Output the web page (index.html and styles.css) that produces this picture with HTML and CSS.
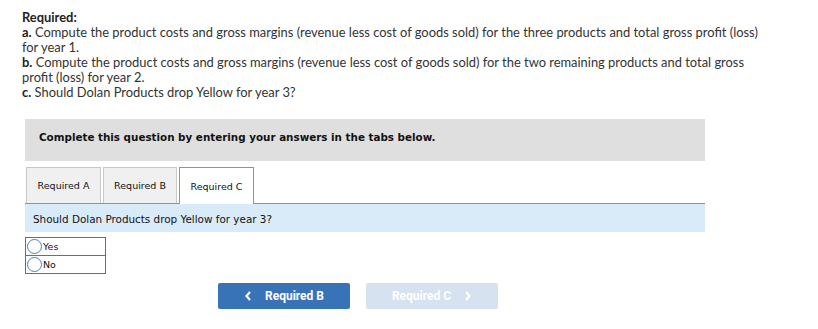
FILE: index.html
```html
<!DOCTYPE html>
<html>
<head>
<meta charset="utf-8">
<link rel="stylesheet" href="styles.css">
</head>
<body>
<div class="page">
  <div class="req">
    <p class="req-title">Required:</p>
    <p><b>a.</b> Compute the product costs and gross margins (revenue less cost of goods sold) for the three products and total gross profit (loss) for year 1.</p>
    <p><b>b.</b> Compute the product costs and gross margins (revenue less cost of goods sold) for the two remaining products and total gross profit (loss) for year 2.</p>
    <p><b>c.</b> Should Dolan Products drop Yellow for year 3?</p>
  </div>
  <div class="question">
    <div class="instructions">Complete this question by entering your answers in the tabs below.</div>
    <div class="tabs">
      <div class="tab">Required A</div>
      <div class="tab tab-b">Required B</div>
      <div class="tab active">Required C</div>
    </div>
    <div class="prompt">Should Dolan Products drop Yellow for year 3?</div>
    <div class="choices">
      <label class="choice"><span class="radio"></span>Yes</label>
      <label class="choice"><span class="radio"></span>No</label>
    </div>
    <div class="nav">
      <button class="btn prev"><svg width="8" height="10" viewBox="0 0 8 10"><path d="M6 1 L2.5 5 L6 9" fill="none" stroke="#fff" stroke-width="2.2"/></svg><span>Required B</span></button>
      <button class="btn next"><span>Required C</span><svg width="8" height="10" viewBox="0 0 8 10"><path d="M2 1 L5.5 5 L2 9" fill="none" stroke="#fff" stroke-width="2.2"/></svg></button>
    </div>
  </div>
</div>
</body>
</html>
```

FILE: styles.css
```css
html, body {
  margin: 0;
  padding: 0;
  background: #fff;
}
.page {
  padding: 10px 0 0 22px;
}
.req {
  width: 745px;
  font-family: Lato, "Open Sans", sans-serif;
  font-size: 12.9px;
  line-height: 15px;
  color: #333;
}
.req p {
  margin: 0;
}
.req b, .req-title {
  font-weight: 700;
  color: #222;
}
.question {
  margin: 19px 0 0 3px;
  width: 680px;
}
.instructions {
  background: #dfdfdf;
  height: 42px;
  box-sizing: border-box;
  padding: 12px 0 0 14px;
  font-family: "DejaVu Sans", Verdana, sans-serif;
  font-size: 10.35px;
  font-weight: 700;
  color: #111;
}
.tabs {
  display: flex;
  gap: 2px;
  margin-top: 6px;
  padding-left: 1px;
  border-bottom: 1px solid #939393;
}
.tab {
  width: 75px;
  height: 36px;
  box-sizing: border-box;
  background: #f0f0f0;
  border: 1px solid #c8c8c8;
  border-bottom: none;
  font-family: "DejaVu Sans", Verdana, sans-serif;
  font-size: 9.5px;
  color: #111;
  display: flex;
  align-items: center;
  justify-content: center;
}
.tab.tab-b {
  width: 74px;
}
.tab.active {
  width: 75px;
  background: #fff;
  border-color: #939393;
  height: 37px;
  margin-bottom: -1px;
}
.prompt {
  background: #d9ebf9;
  height: 28px;
  box-sizing: border-box;
  padding: 9px 0 0 8px;
  font-family: "DejaVu Sans", Verdana, sans-serif;
  font-size: 10.4px;
  color: #111;
}
.choices {
  margin-top: 5px;
  width: 81px;
  border: 1px solid #6e6e6e;
  box-sizing: border-box;
}
.choice {
  display: flex;
  align-items: center;
  height: 17px;
  font-family: "DejaVu Sans", Verdana, sans-serif;
  font-size: 9.5px;
  color: #111;
}
.choice + .choice {
  border-top: 1px solid #6e6e6e;
}
.radio {
  width: 13px;
  height: 13px;
  border: 1px solid #4a7fc1;
  border-radius: 50%;
  margin: 0 1px 0 1px;
  background: #fff;
}
.nav {
  display: flex;
  gap: 16px;
  margin: 9px 0 0 193px;
}
.btn {
  width: 132px;
  height: 26px;
  border: none;
  border-radius: 2px;
  display: flex;
  align-items: center;
  justify-content: center;
  gap: 13px;
  font-family: Roboto, "Open Sans", sans-serif;
  font-size: 12px;
  font-weight: 700;
  color: #fff;
  padding: 0;
}
.btn.prev {
  background: #3873b8;
}
.btn.next {
  background: #d6e2f0;
}
```
